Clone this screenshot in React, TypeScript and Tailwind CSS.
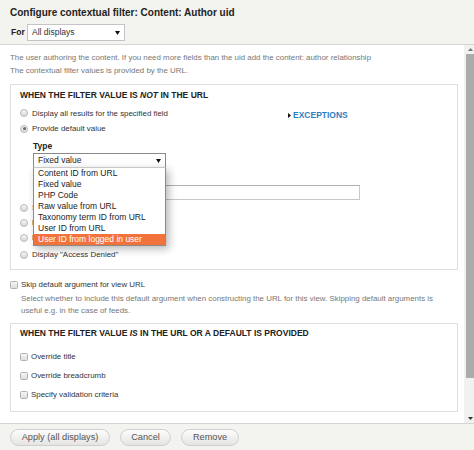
import React from "react";

function Radio({ checked = false }: { checked?: boolean }) {
  return (
    <span className="w-[8px] h-[8px] rounded-full border border-[#b8b8b8] bg-linear-to-b from-[#f6f6f6] to-[#d9d9d9] flex items-center justify-center shrink-0">
      {checked && <span className="w-[3px] h-[3px] rounded-full bg-[#666]" />}
    </span>
  );
}

function Check() {
  return <span className="w-[8px] h-[8px] rounded-[1.5px] border border-[#b0b0b0] bg-linear-to-b from-[#f6f6f6] to-[#dedede] shrink-0" />;
}

function Arrow({ className = "" }: { className?: string }) {
  return (
    <svg width="5" height="4" viewBox="0 0 5 4" className={className}>
      <path d="M0 0 L5 0 L2.5 4 Z" fill="#111" />
    </svg>
  );
}

const items = [
  "Content ID from URL",
  "Fixed value",
  "PHP Code",
  "Raw value from URL",
  "Taxonomy term ID from URL",
  "User ID from URL",
  "User ID from logged in user",
];

export default function App() {
  return (
    <div className="w-[474px] h-[450px] flex flex-col overflow-hidden bg-white text-[#333] font-['Liberation_Sans',Arial,sans-serif]">
      {/* header */}
      <div className="h-[45px] shrink-0 bg-[#f3f3ef] border-b border-[#d4d4d0] px-[10px] pt-[5px]">
        <div className="text-[10px] leading-[15px] font-bold text-[#222]">
          Configure contextual filter: Content: Author uid
        </div>
        <div className="mt-[4px] h-[17px] flex items-center">
          <span className="text-[8.5px] font-bold text-[#222] ml-[1px] w-[16px]">For</span>
          <div className="w-[98px] h-[17px] border border-[#c4c4c4] bg-white flex items-center justify-between pl-[4px] pr-[4px]">
            <span className="text-[8.5px] text-[#333]">All displays</span>
            <Arrow />
          </div>
        </div>
      </div>

      {/* middle */}
      <div className="flex-1 flex min-h-0">
        <div className="flex-1 min-w-0 overflow-hidden pl-[10px] pr-[6px]">
          <div className="pt-[6px] text-[7.9px] leading-[13px] text-[#777]">
            <div>The user authoring the content. If you need more fields than the uid add the content: author relationship</div>
            <div>The contextual filter values is provided by the URL.</div>
          </div>

          {/* fieldset 1 */}
          <div className="mt-[7px] border border-[#dedede] pl-[9px] pt-[4px] pb-[7px]">
            <div className="text-[8.5px] leading-[12px] font-bold text-[#222]">
              WHEN THE FILTER VALUE IS <i>NOT</i> IN THE URL
            </div>
            <div className="mt-[5px] h-[15px] flex items-center">
              <div className="w-[268px] flex items-center gap-[4px]">
                <Radio />
                <span className="text-[7.9px] text-[#333]">Display all results for the specified field</span>
              </div>
              <div className="mt-[3px] flex items-center gap-[2px]">
                <svg width="3" height="5" viewBox="0 0 3 5"><path d="M0 0 L3 2.5 L0 5 Z" fill="#111" /></svg>
                <span className="text-[8.5px] font-bold text-[#2f7ec0]">EXCEPTIONS</span>
              </div>
            </div>
            <div className="h-[15px] flex items-center gap-[4px]">
              <Radio checked />
              <span className="text-[7.9px] text-[#333]">Provide default value</span>
            </div>
            <div className="ml-[13px]">
              <div className="mt-[4px] text-[8.5px] leading-[12px] font-bold text-[#222]">Type</div>
              <div className="relative mt-[1px] w-[133px]">
                <div className="h-[15px] border border-[#8a8a8a] bg-white flex items-center justify-between pl-[4px] pr-[4px]">
                  <span className="text-[8.5px] text-[#222]">Fixed value</span>
                  <Arrow />
                </div>
                <div className="absolute left-0 top-[14px] w-[133px] z-10 bg-white border border-[#8a8a8a] border-t-[#c8c8c8] shadow-[3px_3px_8px_rgba(0,0,0,0.28)]">
                  {items.map((it, i) => (
                    <div
                      key={it}
                      className={
                        i === items.length - 1
                          ? "h-[11px] leading-[11px] pl-[4px] text-[8.5px] bg-[#f1733b] text-white"
                          : "h-[11px] leading-[11px] pl-[4px] text-[8.5px] text-[#222]"
                      }
                    >
                      {it}
                    </div>
                  ))}
                </div>
              </div>
              <div className="mt-[17px] w-[327px] h-[15px] border border-[#c8c8c8] border-t-[#b0b0b0] bg-white" />
            </div>
            <div className="h-[15px] flex items-center gap-[4px]">
              <Radio />
              <span className="text-[7.9px] text-[#333]">Show "Page not found"</span>
            </div>
            <div className="h-[15px] flex items-center gap-[4px]">
              <Radio />
              <span className="text-[7.9px] text-[#333]">Display a summary</span>
            </div>
            <div className="h-[15px] flex items-center gap-[4px]">
              <Radio />
              <span className="text-[7.9px] text-[#333]">Display contents of "No results found"</span>
            </div>
            <div className="mt-[2px] h-[15px] flex items-center gap-[4px]">
              <Radio />
              <span className="text-[7.9px] text-[#333]">Display "Access Denied"</span>
            </div>
          </div>

          {/* skip */}
          <div className="mt-[8px] h-[14px] flex items-center gap-[3px]">
            <Check />
            <span className="text-[7.9px] text-[#333]">Skip default argument for view URL</span>
          </div>
          <div className="mt-[1px] ml-[11px] text-[7.9px] leading-[12px] text-[#777]">
            <div>Select whether to include this default argument when constructing the URL for this view. Skipping default arguments is</div>
            <div>useful e.g. in the case of feeds.</div>
          </div>

          {/* fieldset 2 */}
          <div className="mt-[6px] border border-[#dedede] pl-[9px] pt-[3px] pb-[9px]">
            <div className="text-[8.5px] leading-[12px] font-bold text-[#222]">
              WHEN THE FILTER VALUE <i>IS</i> IN THE URL OR A DEFAULT IS PROVIDED
            </div>
            <div className="mt-[11px] h-[14px] flex items-center gap-[3px]">
              <Check />
              <span className="text-[7.9px] text-[#333]">Override title</span>
            </div>
            <div className="mt-[5px] h-[14px] flex items-center gap-[3px]">
              <Check />
              <span className="text-[7.9px] text-[#333]">Override breadcrumb</span>
            </div>
            <div className="mt-[5px] h-[14px] flex items-center gap-[3px]">
              <Check />
              <span className="text-[7.9px] text-[#333]">Specify validation criteria</span>
            </div>
          </div>
        </div>

        {/* scrollbar */}
        <div className="w-[10px] shrink-0 bg-[#f1f1f1] flex flex-col">
          <div className="h-[9px] flex items-center justify-center pl-[2px]">
            <svg width="5" height="3" viewBox="0 0 5 3"><path d="M0 3 L5 3 L2.5 0 Z" fill="#777" /></svg>
          </div>
          <div className="ml-[2px] h-[324px] bg-[#ababab]" />
          <div className="flex-1" />
          <div className="h-[9px] flex items-center justify-center pl-[2px]">
            <svg width="5" height="3" viewBox="0 0 5 3"><path d="M0 0 L5 0 L2.5 3 Z" fill="#333" /></svg>
          </div>
        </div>
      </div>

      {/* footer */}
      <div className="h-[27px] shrink-0 bg-[#f3f3ef] border-t border-[#d4d4d0] pl-[10px] pt-[5px] flex gap-[10px] items-start">
        <button className="w-[100px] h-[17px] rounded-full border border-[#cfcfcf] bg-linear-to-b from-[#fdfdfd] to-[#e4e4e2] text-[9.2px] text-[#555] flex items-center justify-center">
          Apply (all displays)
        </button>
        <button className="w-[51px] h-[17px] rounded-full border border-[#cfcfcf] bg-linear-to-b from-[#fdfdfd] to-[#e4e4e2] text-[9.2px] text-[#555] flex items-center justify-center">
          Cancel
        </button>
        <button className="w-[58px] h-[17px] rounded-full border border-[#cfcfcf] bg-linear-to-b from-[#fdfdfd] to-[#e4e4e2] text-[9.2px] text-[#555] flex items-center justify-center">
          Remove
        </button>
      </div>
    </div>
  );
}
